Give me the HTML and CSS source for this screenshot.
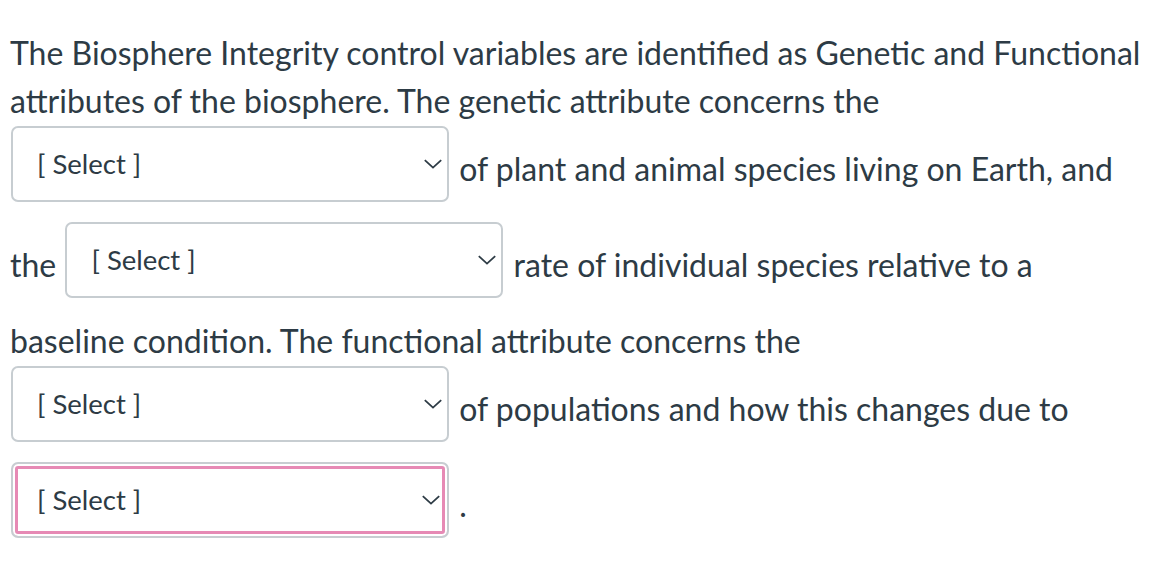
FILE: index.html
```html
<!DOCTYPE html>
<html lang="en">
<head>
<meta charset="utf-8">
<title>Quiz question</title>
<link rel="stylesheet" href="styles.css">
</head>
<body>
<main class="quiz">
<p class="question">The Biosphere Integrity control variables are identified as Genetic and Functional attributes of the biosphere. The genetic attribute concerns the <span class="select"><span class="select-label">[ Select ]</span><svg class="chev" width="18" height="10" viewBox="0 0 18 10"><polyline points="0.8,1.2 9,8.6 17.2,1.2" fill="none" stroke="#2d3b45" stroke-width="1.8"/></svg></span> of plant and animal species living on Earth, and the <span class="select"><span class="select-label">[ Select ]</span><svg class="chev" width="18" height="10" viewBox="0 0 18 10"><polyline points="0.8,1.2 9,8.6 17.2,1.2" fill="none" stroke="#2d3b45" stroke-width="1.8"/></svg></span> rate of individual species relative to a baseline condition. The functional attribute concerns the <span class="select"><span class="select-label">[ Select ]</span><svg class="chev" width="18" height="10" viewBox="0 0 18 10"><polyline points="0.8,1.2 9,8.6 17.2,1.2" fill="none" stroke="#2d3b45" stroke-width="1.8"/></svg></span> of populations and how this changes due to <span class="select select--focus"><span class="select-label">[ Select ]</span><svg class="chev" width="18" height="10" viewBox="0 0 18 10"><polyline points="0.8,1.2 9,8.6 17.2,1.2" fill="none" stroke="#2d3b45" stroke-width="1.8"/></svg></span> .</p>
</main>
</body>
</html>
```
FILE: styles.css
```css
html, body {
  margin: 0;
  padding: 0;
  background: #ffffff;
}

.quiz {
  padding: 29px 10px 0 10px;
  font-family: Lato, "Liberation Sans", sans-serif;
  color: #2d3b45;
}

.question {
  margin: 0;
  font-size: 32px;
  line-height: 48px;
}

.select {
  display: inline-flex;
  align-items: center;
  justify-content: space-between;
  box-sizing: border-box;
  width: 438px;
  height: 76px;
  margin: 1px 2px 19px 1px;
  padding: 0 5px 0 24px;
  border: 2px solid #c7cdd1;
  border-radius: 7px;
  background: #ffffff;
  vertical-align: 7px;
}

.select-label {
  font-size: 27.5px;
  line-height: 1;
}

.chev {
  display: block;
}

.select--focus {
  box-shadow: inset 0 0 0 2px #ffffff, inset 0 0 0 5px #e68ab5;
}

.select--focus .chev {
  margin-right: 2px;
}
```
